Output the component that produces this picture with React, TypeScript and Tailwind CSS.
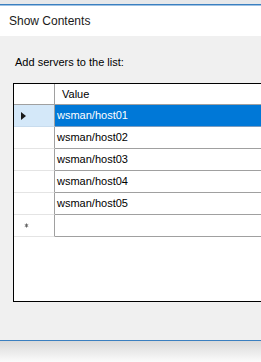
const rows = ["wsman/host01", "wsman/host02", "wsman/host03", "wsman/host04", "wsman/host05"];

const App = () => {
  return (
    <div className="w-[261px] h-[362px] overflow-hidden bg-white flex flex-col font-['Liberation_Sans',Arial,sans-serif]">
      {/* window frame top */}
      <div className="h-[4px] shrink-0 bg-[#e7e8ea]" />
      <div className="h-px shrink-0 bg-[#3a7fc0]" />
      <div className="h-px shrink-0 bg-[#9fc2e3]" />

      {/* title bar */}
      <div className="h-[30px] shrink-0 bg-white flex items-center pl-[9px] text-[12px] text-[#1a1a1a]">
        Show Contents
      </div>

      {/* body */}
      <div className="h-[304px] shrink-0 bg-[#f0f0f0] flex flex-col items-start overflow-hidden">
        <div className="pt-[20px] pl-[15px] text-[11px] leading-[13px] text-black">Add servers to the list:</div>

        <div className="mt-[14px] ml-[13px] w-[290px] shrink-0 h-[219px] bg-white border-l border-t border-b border-black flex flex-col text-[11px] text-black">
          {/* column header */}
          <div className="flex h-[21px] border-b border-[#a0a0a0]">
            <div className="w-[41px] border-r border-[#a0a0a0]" />
            <div className="flex-1 flex items-center pl-[7px] pt-px">Value</div>
          </div>

          {rows.map((r, i) => {
            const sel = i === 0;
            return (
              <div key={r} className="flex h-[22px]">
                <div
                  className={`w-[41px] border-r border-[#a0a0a0] flex items-center pl-[7px] ${
                    sel ? "bg-[#d4e8f9] border-b border-b-[#c8dcee]" : "border-b border-b-[#e4e4e4]"
                  }`}
                >
                  {sel && (
                    <svg width="5" height="8" viewBox="0 0 5 8">
                      <path d="M0 0 L5 4 L0 8 Z" fill="#1a1a1a" />
                    </svg>
                  )}
                </div>
                <div
                  className={`flex-1 flex items-center pl-[2px] border-b ${
                    sel ? "bg-[#0078d7] text-white border-[#7a9cc0]" : "border-[#a0a0a0]"
                  }`}
                >
                  {r}
                </div>
              </div>
            );
          })}

          {/* new row */}
          <div className="flex h-[22px]">
            <div className="w-[41px] border-r border-[#a0a0a0] border-b border-b-[#e4e4e4] flex items-center pl-[10px]">
              <svg width="5" height="5" viewBox="0 0 5 5">
                <path d="M2.5 0.5 V4.5 M0.8 1.5 L4.2 3.5 M0.8 3.5 L4.2 1.5" stroke="#666" strokeWidth="1" />
              </svg>
            </div>
            <div className="flex-1 border-b border-[#a0a0a0]" />
          </div>
        </div>
      </div>

      {/* bottom frame and shadow */}
      <div className="h-px shrink-0 bg-[#3a7fc0]" />
      <div className="flex-1 bg-gradient-to-b from-[#d9d9d9] to-[#fbfbfb]" />
    </div>
  );
};

export default App;
